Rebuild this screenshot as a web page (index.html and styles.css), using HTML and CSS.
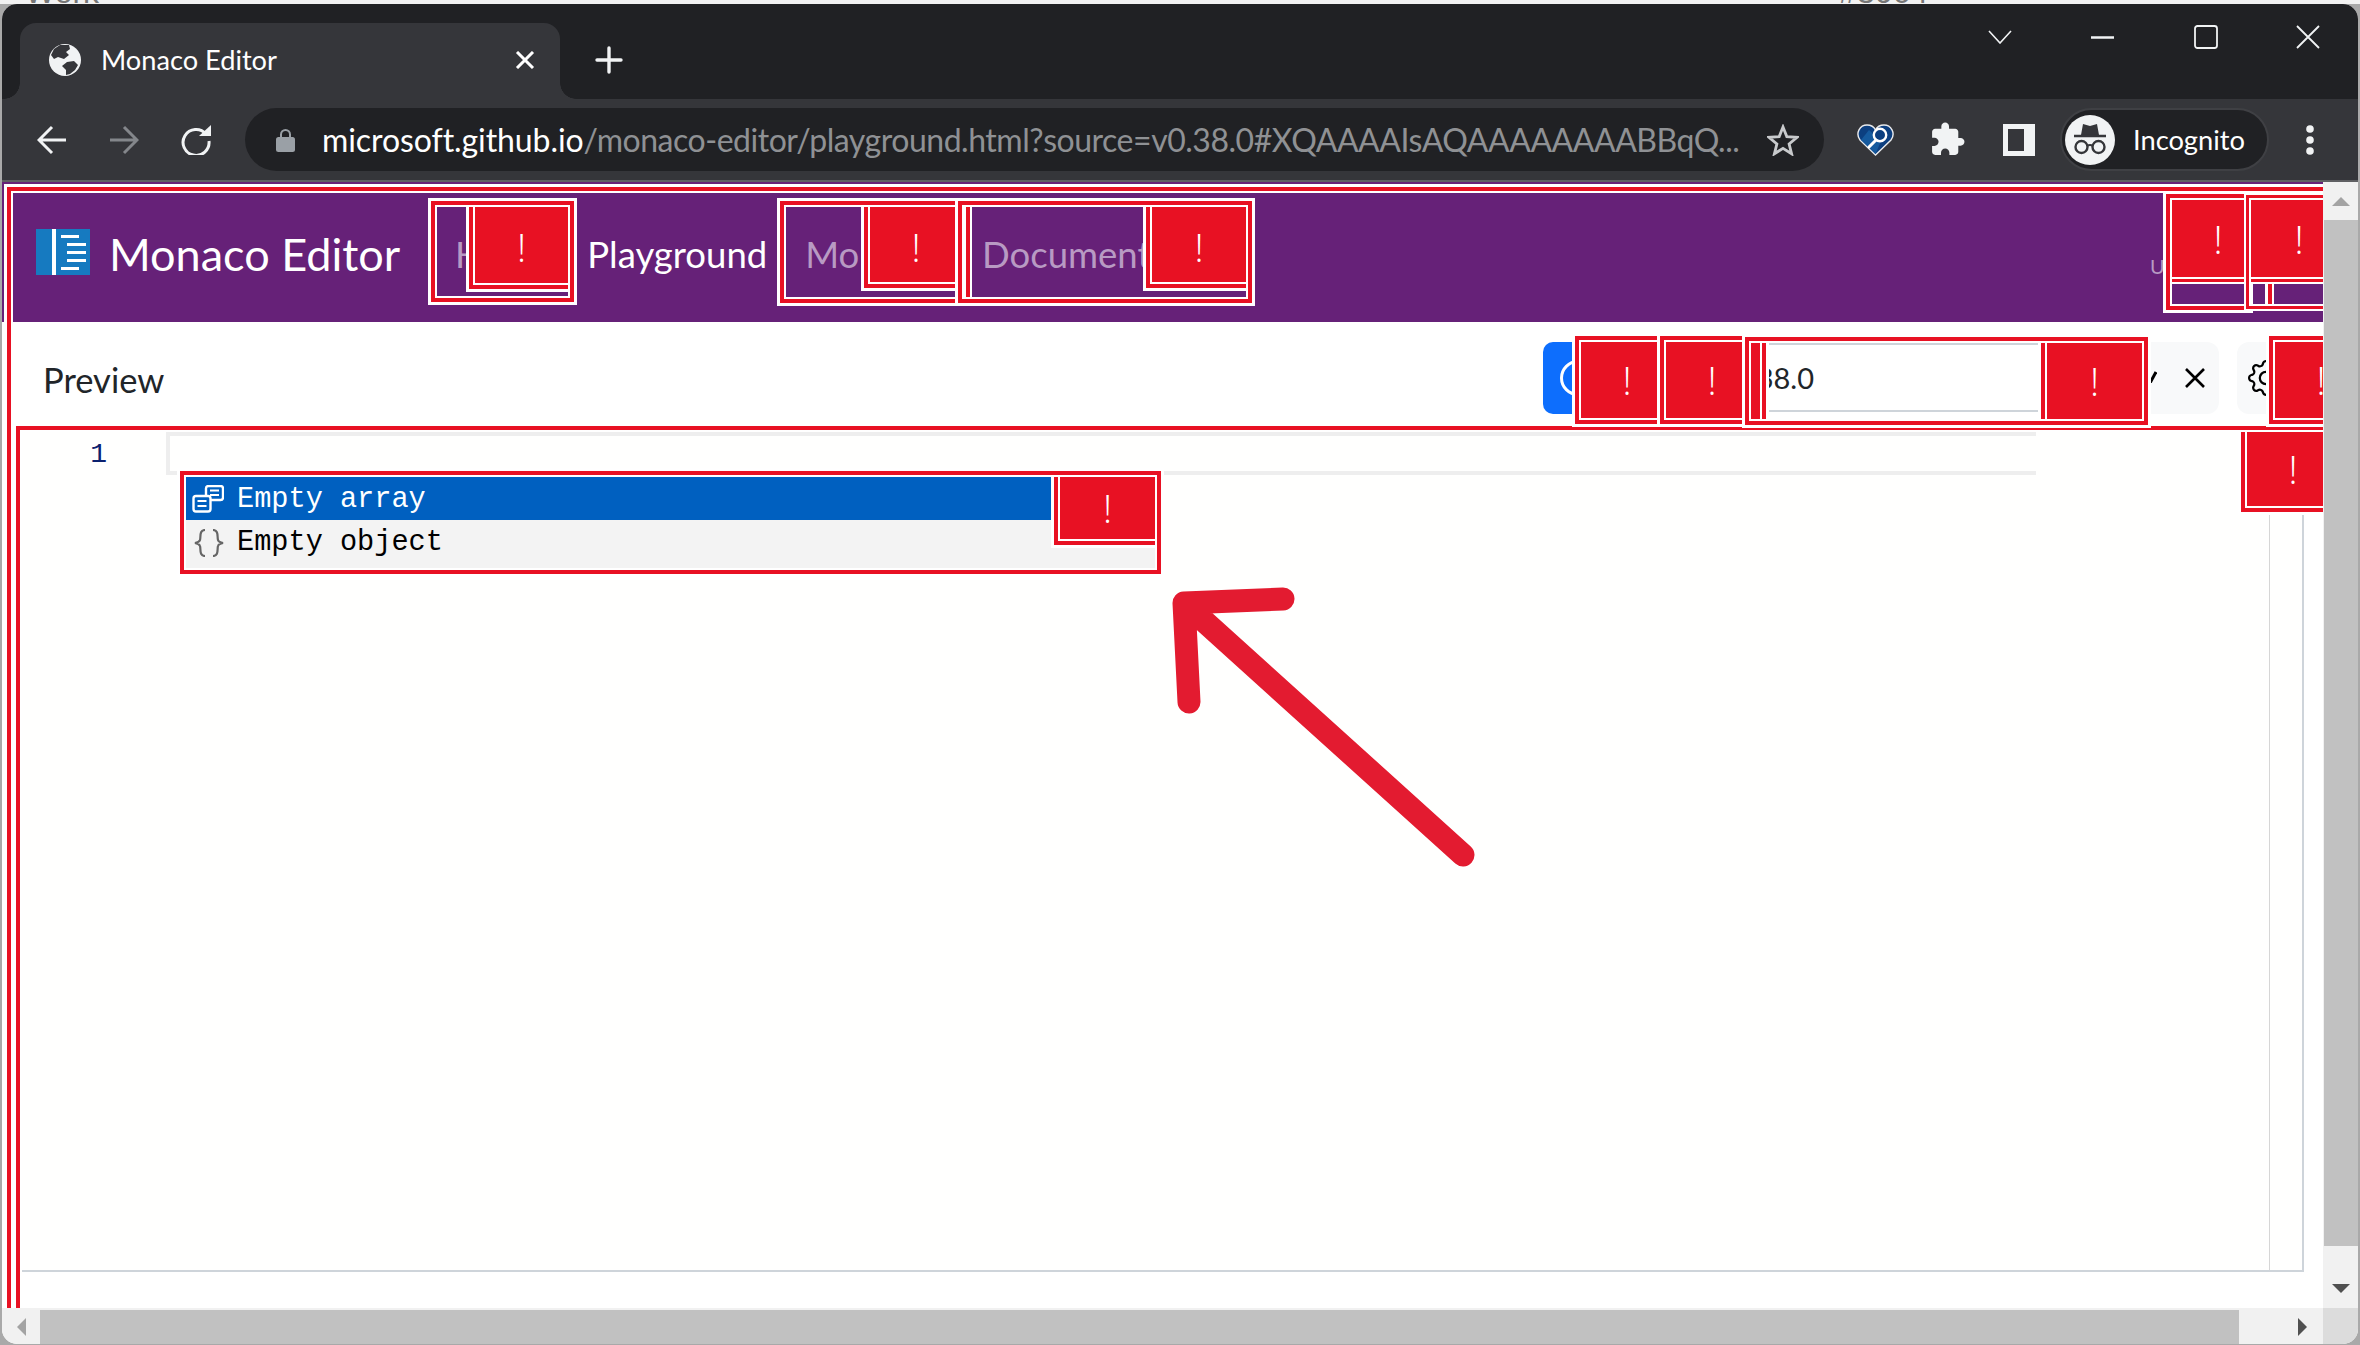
FILE: index.html
```html
<!DOCTYPE html>
<html lang="en">
<head>
<meta charset="utf-8">
<title>Monaco Editor</title>
<link rel="stylesheet" href="styles.css">
</head>
<body>
<div class="backdrop"><span class="bd-work">Work</span><span class="bd-num">#3064</span></div>
<div class="window">
  <header class="titlebar">
    <div class="tab">
      <svg class="globe" viewBox="0 0 32 32"><circle cx="16" cy="16" r="16" fill="#f1f3f4"/><path d="M11 1 L20 1 L21 5 L17 8 L20 11 L15 15 L9 13 L5 15 L2 11 L5 5Z M18 18 L25 17 L29 21 L26 26 L21 30 L17 31 L17 26 L13 22 Z" fill="#35363a"/></svg>
      <span class="tab-title">Monaco Editor</span>
      <svg class="tab-close" viewBox="0 0 20 18"><path d="M2 1 L18 17 M18 1 L2 17" stroke="#fff" stroke-width="3" fill="none"/></svg>
    </div>
    <svg class="new-tab" viewBox="0 0 28 28"><path d="M14 2 V26 M2 14 H26" stroke="#f1f3f4" stroke-width="3.4" stroke-linecap="round" fill="none"/></svg>
    <div class="win-controls">
      <div class="win-btn"><svg width="24" height="14" viewBox="0 0 24 14"><path d="M1 1 L12 13 L23 1" stroke="#f1f3f4" stroke-width="1.6" fill="none"/></svg></div>
      <div class="win-btn"><svg width="23" height="3" viewBox="0 0 23 3"><path d="M0 1.5 H23" stroke="#f1f3f4" stroke-width="2.4"/></svg></div>
      <div class="win-btn"><svg width="24" height="24" viewBox="0 0 24 24"><rect x="1" y="1" width="22" height="22" rx="2.5" stroke="#f1f3f4" stroke-width="1.8" fill="none"/></svg></div>
      <div class="win-btn"><svg width="24" height="24" viewBox="0 0 24 24"><path d="M1 1 L23 23 M23 1 L1 23" stroke="#f1f3f4" stroke-width="1.8" fill="none"/></svg></div>
    </div>
  </header>
  <nav class="toolbar">
    <div class="tb-btn"><svg width="30" height="30" viewBox="0 0 30 30"><path d="M29 15 H3 M15 2 L2 15 L15 28" stroke="#f1f3f4" stroke-width="3" fill="none"/></svg></div>
    <div class="tb-btn"><svg width="30" height="30" viewBox="0 0 30 30"><path d="M1 15 H27 M15 2 L28 15 L15 28" stroke="#84878b" stroke-width="3" fill="none"/></svg></div>
    <div class="tb-btn"><svg width="32" height="30" viewBox="0 0 32 30"><path d="M26 9 A13 13 0 1 0 29 16" stroke="#f1f3f4" stroke-width="3" fill="none"/><path d="M19 11 H31 V0Z" fill="#f1f3f4"/></svg></div>
    <div class="omnibox">
      <svg class="lock" viewBox="0 0 19 24"><path d="M5 10 V6.500 A4.500 4.500 0 0 1 14 6.500 V10" stroke="#9aa0a6" stroke-width="2" fill="none"/><rect y="9" width="19" height="15" rx="2.5" fill="#9aa0a6"/></svg>
      <div class="url"><span class="url-host">microsoft.github.io</span><span class="url-path">/monaco-editor/playground.html?source=v0.38.0#XQAAAAIsAQAAAAAAAABBqQ...</span></div>
      <svg class="star" viewBox="0 0 32 32"><path d="M16 3 L19.8 12.6 L30 13.3 L22.1 19.9 L24.6 29.8 L16 24.3 L7.4 29.8 L9.9 19.9 L2 13.3 L12.2 12.6Z" stroke="#c8cacc" stroke-width="2.8" fill="none"/></svg>
    </div>
    <div class="tb-btn tb-first"><svg width="37" height="32" viewBox="0 0 37 32"><path d="M18.5 31 L3 16 C-2 9 3 1 10 1 C14 1 17 3 18.5 6 C20 3 23 1 27 1 C34 1 39 9 34 16Z" fill="#0c3f80" stroke="#e8eaed" stroke-width="1.4"/><path d="M18.5 30 L4 16 L12 6 L24 17Z" fill="#155a9e"/><circle cx="23" cy="11" r="6.2" fill="#0c3f80" stroke="#fff" stroke-width="2.4"/><path d="M19 16 L12 23" stroke="#fff" stroke-width="3" stroke-linecap="round"/></svg></div>
    <div class="tb-btn"><svg width="37" height="37" viewBox="0 0 24 24"><path fill="#f1f3f4" d="M20.5 11H19V7c0-1.1-.9-2-2-2h-4V3.5C13 2.12 11.88 1 10.5 1S8 2.12 8 3.5V5H4c-1.1 0-1.99.9-1.99 2v3.8H3.5c1.49 0 2.7 1.21 2.7 2.7s-1.21 2.7-2.7 2.7H2V20c0 1.1.9 2 2 2h3.8v-1.5c0-1.49 1.21-2.7 2.7-2.7 1.49 0 2.7 1.21 2.7 2.7V22H17c1.1 0 2-.9 2-2v-4h1.5c1.38 0 2.5-1.12 2.5-2.5S21.88 11 20.5 11z"/></svg></div>
    <div class="tb-btn"><svg width="32" height="32" viewBox="0 0 32 32"><path fill="#f1f3f4" fill-rule="evenodd" d="M0 0 H32 V32 H0Z M5 5 V27 H21 V5Z"/></svg></div>
    <div class="profile">
      <svg class="avatar" viewBox="0 0 50 50"><circle cx="25" cy="25" r="25" fill="#f1f3f4"/><path d="M16 20 L18 9 L25 11 L32 9 L34 20Z" fill="#35363a"/><path d="M9 21 H41" stroke="#35363a" stroke-width="2.4"/><circle cx="16.5" cy="32" r="6" fill="none" stroke="#35363a" stroke-width="2.4"/><circle cx="33.5" cy="32" r="6" fill="none" stroke="#35363a" stroke-width="2.4"/><path d="M22 31 Q25 29 28 31" fill="none" stroke="#35363a" stroke-width="2.2"/></svg>
      <span class="profile-name">Incognito</span>
    </div>
    <div class="tb-btn tb-menu"><svg width="8" height="30" viewBox="0 0 8 30"><circle cx="4" cy="4" r="3.8" fill="#f1f3f4"/><circle cx="4" cy="15" r="3.8" fill="#f1f3f4"/><circle cx="4" cy="26" r="3.8" fill="#f1f3f4"/></svg></div>
  </nav>
  <div class="page">
    <main class="main">
      <div class="site-nav">
        <svg class="logo" viewBox="0 0 54 46"><rect width="54" height="46" fill="#167ac0"/><rect x="16" width="4" height="46" fill="#fff"/><rect x="25" y="6" width="18" height="3" fill="#fff"/><rect x="31" y="14" width="19" height="3" fill="#fff"/><rect x="31" y="22" width="19" height="3" fill="#fff"/><rect x="31" y="30" width="19" height="3" fill="#fff"/><rect x="25" y="38" width="18" height="3" fill="#fff"/></svg>
        <span class="brand">Monaco Editor</span>
        <a class="link">Home</a>
        <a class="link active">Playground</a>
        <a class="link">Monarch</a>
        <a class="link">Documentation</a>
        <span class="nav-right">U</span>
      </div>
      <div class="subbar">
        <span class="preview">Preview</span>
        <div class="btn-run"><svg class="run-icon" viewBox="0 0 36 36"><circle cx="18" cy="18" r="16.5" fill="none" stroke="#fff" stroke-width="3"/></svg></div>
        <div class="version">
          <div class="version-field"><span class="version-text">v0.38.0</span></div>
        </div>
        <div class="version-btn">
          <svg class="tick" viewBox="0 0 8 12"><path d="M1 12 L7 1" stroke="#000" stroke-width="3" fill="none"/></svg>
          <svg class="close-x" viewBox="0 0 20 20"><path d="M1 1 L19 19 M19 1 L1 19" stroke="#000" stroke-width="2.6" fill="none"/></svg>
        </div>
        <div class="gear-btn"><svg class="gear" viewBox="0 0 16 16"><path d="M8 4.754a3.246 3.246 0 1 0 0 6.492 3.246 3.246 0 0 0 0-6.492zM5.754 8a2.246 2.246 0 1 1 4.492 0 2.246 2.246 0 0 1-4.492 0z"/><path d="M9.796 1.343c-.527-1.79-3.065-1.79-3.592 0l-.094.319a.873.873 0 0 1-1.255.52l-.292-.16c-1.64-.892-3.433.902-2.54 2.541l.159.292a.873.873 0 0 1-.52 1.255l-.319.094c-1.79.527-1.79 3.065 0 3.592l.319.094a.873.873 0 0 1 .52 1.255l-.16.292c-.892 1.64.901 3.434 2.541 2.54l.292-.159a.873.873 0 0 1 1.255.52l.094.319c.527 1.79 3.065 1.79 3.592 0l.094-.319a.873.873 0 0 1 1.255-.52l.292.16c1.64.893 3.434-.902 2.54-2.541l-.159-.292a.873.873 0 0 1 .52-1.255l.319-.094c1.79-.527 1.79-3.065 0-3.592l-.319-.094a.873.873 0 0 1-.52-1.255l.16-.292c.893-1.64-.902-3.433-2.541-2.54l-.292.159a.873.873 0 0 1-1.255-.52l-.094-.319zm-2.633.283c.246-.835 1.428-.835 1.674 0l.094.319a1.873 1.873 0 0 0 2.693 1.115l.291-.16c.764-.415 1.6.42 1.184 1.185l-.159.292a1.873 1.873 0 0 0 1.116 2.692l.318.094c.835.246.835 1.428 0 1.674l-.319.094a1.873 1.873 0 0 0-1.115 2.693l.16.291c.415.764-.42 1.6-1.185 1.184l-.291-.159a1.873 1.873 0 0 0-2.693 1.116l-.094.318c-.246.835-1.428.835-1.674 0l-.094-.319a1.873 1.873 0 0 0-2.692-1.115l-.292.16c-.764.415-1.6-.42-1.184-1.185l.159-.291A1.873 1.873 0 0 0 1.945 8.93l-.319-.094c-.835-.246-.835-1.428 0-1.674l.319-.094A1.873 1.873 0 0 0 3.06 4.377l-.16-.292c-.415-.764.42-1.6 1.185-1.184l.292.159a1.873 1.873 0 0 0 2.692-1.115l.094-.319z"/></svg></div>
      </div>
      <div class="editor">
        <div class="gutter">1</div>
        <div class="code"><div class="current-line"></div></div>
        <div class="minimap"></div>
      </div>

      <div class="flag frame-page"></div>
      <div class="flag frame-editor">
        <div class="flag flag-thin-e bang">!</div>
        <div class="flag widget">
          <div class="row row-selected">
            <svg class="kind" viewBox="0 0 32 28"><rect x="14" y="1" width="17" height="14" rx="2.5" fill="none" stroke="#fff" stroke-width="2.4"/><path d="M18 5.5 H27 M18 10 H27" stroke="#fff" stroke-width="2"/><rect x="1.5" y="11" width="17" height="15.5" rx="2.5" fill="#0060c0" stroke="#fff" stroke-width="2.4"/><path d="M5.5 16 H14.5 M5.5 21 H14.5" stroke="#fff" stroke-width="2"/></svg>
            <span>Empty array</span>
          </div>
          <div class="row">
            <svg class="kind" viewBox="0 0 32 28"><path d="M13 1 C7 1 9 8 8 11 C7.5 13 3 14 3 14 C3 14 7.5 15 8 17 C9 20 7 27 13 27 M21 1 C27 1 25 8 26 11 C26.5 13 31 14 31 14 C31 14 26.5 15 26 17 C25 20 27 27 21 27" fill="none" stroke="#666" stroke-width="2.2"/></svg>
            <span>Empty object</span>
          </div>
          <div class="flag badge-widget bang">!</div>
        </div>
      </div>
      <div class="flag f-home"><div class="flag badge-home bang">!</div></div>
      <div class="flag f-mo"><div class="flag badge-mo bang">!</div></div>
      <div class="flag f-doc"><div class="flag stripe-doc"></div><div class="flag badge-doc bang">!</div></div>
      <div class="flag f-r1"><div class="flag thin badge-r1 bang">!</div></div>
      <div class="flag thin f-r2"><div class="flag stripe-r2"></div><div class="flag thin badge-r2 bang">!</div></div>
      <div class="flag solid f-a bang">!</div>
      <div class="flag solid f-b bang">!</div>
      <div class="flag f-c"><div class="flag stripe-c"></div><div class="flag badge-c bang">!</div></div>
      <div class="flag solid f-d bang">!</div>
      <svg class="arrow" viewBox="1165 585 320 290"><path d="M1463 855 L1184 603 M1283 599 L1184 603 L1189 702" fill="none" stroke="#e31b30" stroke-width="23" stroke-linecap="round" stroke-linejoin="round"/></svg>
    </main>
    <div class="vscroll">
      <div class="sb-btn sb-up"><i class="tri tri-up"></i></div>
      <div class="sb-thumb"></div>
      <div class="sb-btn sb-down"><i class="tri tri-down"></i></div>
    </div>
    <div class="hscroll">
      <div class="sb-btn sb-left"><i class="tri tri-left"></i></div>
      <div class="sb-thumb"></div>
      <div class="sb-btn sb-right"><i class="tri tri-right"></i></div>
    </div>
    <div class="corner"></div>
  </div>
</div>
</body>
</html>
```
FILE: styles.css
```css
* { box-sizing: border-box; }
html, body { margin: 0; height: 100%; }
body { background: #a9a9a9; overflow: hidden; font-family: "Lato", "Liberation Sans", sans-serif; }

.backdrop { height: 4px; overflow: hidden; background: #f2f2f2; position: relative; color: #777; font-family: "Liberation Sans", sans-serif; font-size: 32px; line-height: 4px; display: flex; }
.bd-work { margin-left: 25px; margin-top: -10px; }
.bd-num { margin-left: 1740px; margin-top: -10px; }

.window { width: 2356px; height: 1340px; margin: 0 2px; border-radius: 15px; overflow: hidden; display: flex; flex-direction: column; background: #fff; }

/* title bar */
.titlebar { height: 95px; flex: none; background: #202124; display: flex; align-items: flex-end; padding-left: 18px; }
.tab { position: relative; width: 540px; height: 76px; background: #35363a; border-radius: 16px 16px 0 0; display: flex; align-items: center; padding: 0 25px 3px 29px; color: #fff; }
.tab::before, .tab::after { content: ""; position: absolute; bottom: 0; width: 16px; height: 16px; }
.tab::before { left: -16px; background: radial-gradient(circle at 0 0, #202124 15.5px, #35363a 16px); }
.tab::after { right: -16px; background: radial-gradient(circle at 100% 0, #202124 15.5px, #35363a 16px); }
.globe { width: 32px; height: 32px; flex: none; }
.tab-title { margin-left: 20px; font-size: 27.2px; flex: 1; line-height: 1; }
.tab-close { width: 20px; height: 18px; flex: none; }
.new-tab { width: 28px; height: 28px; margin: 0 0 25px 35px; flex: none; }
.win-controls { margin-left: auto; align-self: flex-start; display: flex; }
.win-btn { width: 103px; height: 64px; display: flex; align-items: center; justify-content: center; margin-top: 1px; }
.win-controls .win-btn:last-child { width: 101px; }

/* toolbar */
.toolbar { height: 83px; flex: none; background: #35363a; border-bottom: 2px solid #5f6063; display: flex; align-items: flex-start; padding: 9px 0 0 14px; }
.tb-btn { width: 72px; height: 63px; display: flex; align-items: center; justify-content: center; flex: none; }
.omnibox { width: 1579px; height: 63px; margin-left: 13px; flex: none; background: #202124; border-radius: 32px; display: flex; align-items: center; padding: 0 25px 0 31px; }
.lock { width: 19px; height: 24px; flex: none; }
.url { margin-left: 27px; flex: 1; font-size: 32px; white-space: nowrap; overflow: hidden; }
.url-host { color: #fff; letter-spacing: -0.08px; }
.url-path { color: #8f9194; letter-spacing: -0.47px; }
.star { width: 32px; height: 32px; flex: none; }
.tb-first { margin-left: 15px; }
.profile { width: 209px; height: 63px; margin-left: 5px; flex: none; border-radius: 32px; background: #202124; border: 2px solid #3f4044; display: flex; align-items: center; padding-left: 3px; }
.avatar { width: 50px; height: 50px; flex: none; }
.profile-name { margin-left: 18px; color: #fff; font-size: 27.3px; }
.tb-menu { margin-left: 5px; }

/* page */
.page { flex: 1; min-height: 0; display: grid; grid-template-columns: 2321px 35px; grid-template-rows: 1126px 36px; }
.main { position: relative; overflow: hidden; display: flex; flex-direction: column; background: #fff; }

.site-nav { height: 140px; flex: none; background: #662178; display: flex; align-items: center; padding-left: 34px; }
.logo { width: 54px; height: 46px; flex: none; }
.brand { margin-left: 19px; width: 329px; flex: none; color: #fff; font-size: 45px; padding-top: 3px; }
.link { padding: 3px 17px 0; color: #b89ac3; font-size: 36.5px; flex: none; }
.link.active { color: #fff; margin-right: 4px; margin-left: 1px; }
.nav-right { margin-left: auto; width: 173px; flex: none; color: #b89ac3; font-size: 20px; padding-top: 28px; }

.subbar { height: 108px; flex: none; display: flex; align-items: flex-start; padding: 20px 23px 0 41px; }
.preview { font-size: 34.5px; color: #212529; margin-top: 17px; margin-right: auto; }
.btn-run { width: 127px; height: 72px; background: #0d6efd; border-radius: 10px 0 0 10px; display: flex; align-items: center; padding-left: 17px; }
.run-icon { width: 36px; height: 36px; }
.version { width: 379px; margin-left: 99px; margin-top: 1px; }
.version-field { width: 269px; height: 69px; border-top: 2px solid #ced4da; border-bottom: 2px solid #ced4da; overflow: visible; position: relative; display: flex; align-items: center; }
.version-text { position: absolute; right: 224px; font-size: 29px; color: #212529; white-space: nowrap; }
.version-btn { width: 71px; height: 72px; background: #f8f9fa; border-radius: 0 12px 12px 0; position: relative; display: flex; align-items: center; padding-left: 37px; }
.tick { width: 8px; height: 12px; position: absolute; left: 1px; top: 29px; }
.close-x { width: 20px; height: 20px; }
.gear-btn { width: 63px; height: 72px; margin-left: 18px; background: #f8f9fa; border-radius: 12px; display: flex; align-items: center; padding-left: 11px; }
.gear { width: 36px; height: 36px; flex: none; }

.editor { flex: 1; min-height: 0; margin: 0 19px 36px 18px; border: 2px solid #ced4da; background: #fffffe; display: flex; }
.gutter { width: 144px; flex: none; padding: 7px 59px 0 0; text-align: right; font-family: "Liberation Mono", monospace; font-size: 28px; line-height: 32px; color: #0b216f; }
.code { flex: 1; min-width: 0; }
.current-line { width: 1870px; height: 43px; border: 4px solid #eeeeee; border-right: 0; }
.minimap { width: 33px; flex: none; border-left: 1px solid #d6d6d6; }

/* annotation flags */
.flag { position: absolute; overflow: hidden; box-shadow: 0 0 0 2px #fff, 0 0 0 6px #e81123, 0 0 0 9px #fff; }
.flag.thin { box-shadow: 0 0 0 2px #fff, 0 0 0 5px #e81123, 0 0 0 7px #fff; }
.solid, .bang { background: #e81123; }
.bang { display: flex; align-items: center; justify-content: center; color: #fff; font-family: "Open Sans", "Liberation Sans", sans-serif; font-weight: 300; font-size: 38px; }
.frame-page { left: 11px; top: 11px; width: 3000px; height: 3000px; }
.frame-editor { left: 20px; top: 250px; width: 3000px; height: 3000px; }
.flag-thin-e { left: 2225px; top: 0; width: 92px; height: 74px; }
.widget { left: 164px; top: 45px; width: 969px; height: 91px; background: #f3f3f3; font-family: "Liberation Mono", monospace; font-size: 28.6px; color: #000; }
.row { height: 43px; display: flex; align-items: center; padding: 1px 0 0 6px; white-space: pre; }
.row-selected { background: #0060c0; color: #fff; }
.row + .row { padding-top: 2px; }
.kind { width: 32px; height: 28px; flex: none; margin-right: 13px; }
.badge-widget { left: 874px; top: 0; width: 95px; height: 62px; }

.f-home { left: 435px; top: 25px; width: 131px; height: 89px; }
.badge-home { left: 38px; top: -6px; width: 93px; height: 82px; padding-top: 10px; }
.f-mo { left: 784px; top: 25px; width: 174px; height: 90px; }
.badge-mo { left: 84px; top: -6px; width: 92px; height: 81px; padding-top: 10px; }
.f-doc { left: 962px; top: 25px; width: 282px; height: 90px; }
.stripe-doc { left: 8px; top: -30px; width: 1000px; height: 1000px; }
.badge-doc { left: 188px; top: -6px; width: 94px; height: 81px; padding-top: 10px; }
.f-r1 { left: 2170px; top: 18px; width: 72px; height: 104px; }
.badge-r1 { left: 0; top: 0; width: 92px; height: 77px; }
.f-r2 { left: 2249px; top: 18px; width: 200px; height: 104px; }
.stripe-r2 { left: 23px; top: -30px; width: 1000px; height: 1000px; }
.badge-r2 { left: 0; top: 0; width: 96px; height: 77px; }
.f-a { left: 1579px; top: 160px; width: 92px; height: 76px; }
.f-b { left: 1664px; top: 160px; width: 92px; height: 76px; }
.f-c { left: 1749px; top: 161px; width: 391px; height: 76px; }
.stripe-c { left: -6px; top: 0; width: 15px; height: 76px; background: #e81123; }
.badge-c { left: 296px; top: 0; width: 95px; height: 76px; }
.f-d { left: 2273px; top: 160px; width: 92px; height: 76px; }

.arrow { position: absolute; left: 1163px; top: 403px; width: 320px; height: 290px; }

/* scrollbars */
.vscroll { display: flex; flex-direction: column; background: #f1f1f1; }
.hscroll { display: flex; background: #f1f1f1; padding-top: 2px; }
.corner { background: #dcdcdc; }
.sb-thumb { flex: 1; background: #c1c1c1; }
.vscroll .sb-thumb { margin-left: 1px; }
.sb-btn { flex: none; display: flex; align-items: center; justify-content: center; }
.sb-up { height: 38px; }
.sb-down { height: 62px; padding-top: 23px; }
.sb-left { width: 38px; }
.sb-right { width: 84px; padding-left: 43px; }
.tri { display: block; width: 0; height: 0; border-style: solid; border-color: transparent; }
.tri-up { border-width: 0 9px 9px; border-bottom-color: #a3a3a3; }
.tri-down { border-width: 9px 9px 0; border-top-color: #505050; }
.tri-left { border-width: 9px 9px 9px 0; border-right-color: #a3a3a3; }
.tri-right { border-width: 9px 0 9px 9px; border-left-color: #505050; }
```
